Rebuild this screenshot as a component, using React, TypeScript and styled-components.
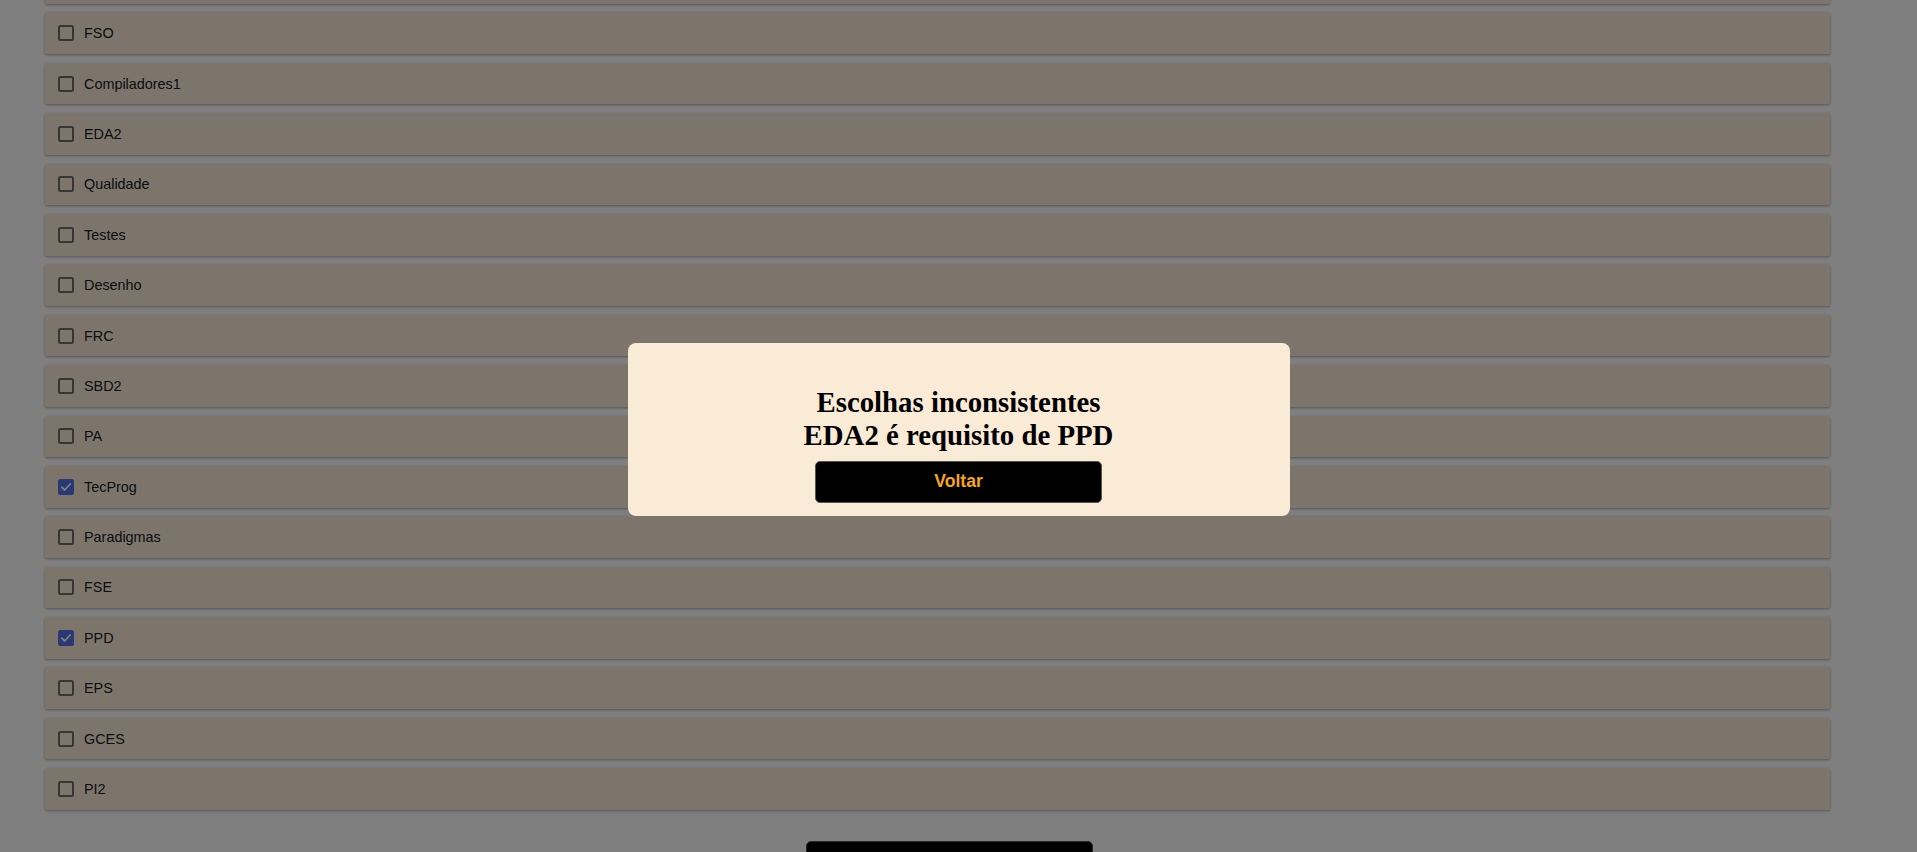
import React from 'react'
import styled, { createGlobalStyle } from 'styled-components'

const GlobalStyle = createGlobalStyle`
  html, body {
    margin: 0;
    padding: 0;
    background: #ffffff;
    font-family: 'Liberation Sans', Arial, sans-serif;
    overflow: hidden;
  }
`

const Page = styled.div`
  height: 100vh;
  overflow: hidden;
`

const SubjectList = styled.ul`
  list-style: none;
  margin: -38px 87px 0 45px;
  padding: 0;
`

const SubjectRow = styled.li`
  margin-bottom: 8.8px;
  background: antiquewhite;
  border-radius: 2px;
  box-shadow: 0 1px 3px rgba(0, 0, 0, 0.35);
`

const RowLabel = styled.label`
  display: flex;
  align-items: center;
  gap: 10px;
  height: 41.6px;
  padding: 0 13px;
`

const HiddenInput = styled.input`
  display: none;
`

const CheckBox = styled.span<{ $checked: boolean }>`
  display: flex;
  align-items: center;
  justify-content: center;
  width: 16px;
  height: 16px;
  box-sizing: border-box;
  border: 2px solid ${(p) => (p.$checked ? '#5470e8' : '#6e6a66')};
  border-radius: 2.5px;
  background: ${(p) => (p.$checked ? '#5470e8' : 'transparent')};
  flex-shrink: 0;
`

const SubjectName = styled.span`
  font-size: 14.4px;
  color: #141a24;
`

const Footer = styled.div`
  display: flex;
  justify-content: center;
  padding-right: 19px;
  margin-top: 31px;
`

const SubmitButton = styled.button`
  width: 287px;
  height: 42px;
  background: #000;
  color: #f5a524;
  border: 1px solid #555;
  border-radius: 5px;
  font-family: 'Liberation Sans', Arial, sans-serif;
  font-weight: bold;
  font-size: 17.6px;
`

const Overlay = styled.div`
  position: fixed;
  inset: 0;
  background: rgba(0, 0, 0, 0.5);
  display: flex;
  align-items: center;
  justify-content: center;
  padding-top: 7px;
`

const Modal = styled.div`
  width: 662px;
  box-sizing: border-box;
  padding: 43px 0 13px;
  background: antiquewhite;
  border-radius: 8px;
  display: flex;
  flex-direction: column;
  align-items: center;
  gap: 8.8px;
`

const ModalTitle = styled.h2`
  margin: 0;
  font-family: 'Liberation Serif', 'Times New Roman', serif;
  font-weight: bold;
  font-size: 28.8px;
  text-align: center;
  color: #000;
`

const subjects = [
  { name: 'OO', checked: false },
  { name: 'FSO', checked: false },
  { name: 'Compiladores1', checked: false },
  { name: 'EDA2', checked: false },
  { name: 'Qualidade', checked: false },
  { name: 'Testes', checked: false },
  { name: 'Desenho', checked: false },
  { name: 'FRC', checked: false },
  { name: 'SBD2', checked: false },
  { name: 'PA', checked: false },
  { name: 'TecProg', checked: true },
  { name: 'Paradigmas', checked: false },
  { name: 'FSE', checked: false },
  { name: 'PPD', checked: true },
  { name: 'EPS', checked: false },
  { name: 'GCES', checked: false },
  { name: 'PI2', checked: false },
]

const App: React.FC = () => {
  return (
    <>
      <GlobalStyle />
      <Page>
        <SubjectList>
          {subjects.map((s) => (
            <SubjectRow key={s.name}>
              <RowLabel>
                <HiddenInput type="checkbox" defaultChecked={s.checked} />
                <CheckBox $checked={s.checked}>
                  {s.checked && (
                    <svg width="12" height="12" viewBox="0 0 12 12">
                      <polyline
                        points="1.8,6.2 4.6,9 10.2,3"
                        fill="none"
                        stroke="#fff"
                        strokeWidth="1.8"
                        strokeLinecap="round"
                        strokeLinejoin="round"
                      />
                    </svg>
                  )}
                </CheckBox>
                <SubjectName>{s.name}</SubjectName>
              </RowLabel>
            </SubjectRow>
          ))}
        </SubjectList>
        <Footer>
          <SubmitButton>Confirmar</SubmitButton>
        </Footer>
      </Page>
      <Overlay>
        <Modal>
          <ModalTitle>
            Escolhas inconsistentes
            <br />
            EDA2 é requisito de PPD
          </ModalTitle>
          <SubmitButton>Voltar</SubmitButton>
        </Modal>
      </Overlay>
    </>
  )
}

export default App
